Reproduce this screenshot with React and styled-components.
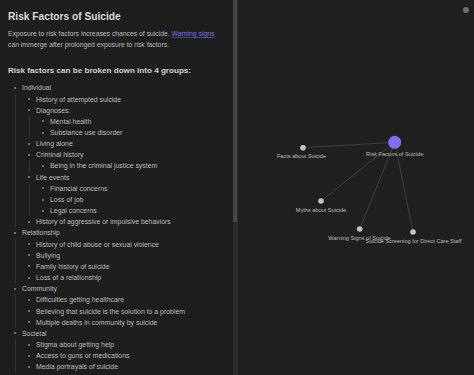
import React from "react";
import styled, { createGlobalStyle } from "styled-components";

const Global = createGlobalStyle`
  html, body {
    margin: 0;
    padding: 0;
    background: #1e1e1e;
  }
  body {
    font-family: "Liberation Sans", Arial, sans-serif;
  }
`;

//whole window, note on the left and graph on the right
const Window = styled.div`
  display: flex;
  width: 474px;
  height: 375px;
  overflow: hidden;
`;

//note pane
const NotePane = styled.div`
  width: 233px;
  flex: none;
  box-sizing: border-box;
  padding: 10px 8px 0 8px;
  background: #1e1e1e;
  overflow: hidden;
`;

const Title = styled.h1`
  margin: 0;
  font-size: 10.2px;
  line-height: 14px;
  font-weight: 700;
  color: #dcdcdc;
`;

const Para = styled.p`
  margin: 5px 0 0 0;
  font-size: 6.8px;
  line-height: 10.7px;
  color: #bdbdbd;
`;

const Link = styled.a`
  color: #7d6ff0;
  text-decoration: underline;
  text-decoration-color: #4a4290;
`;

const Heading = styled.h2`
  margin: 14.3px 0 0 0;
  font-size: 8.1px;
  line-height: 12px;
  font-weight: 700;
  color: #d4d4d4;
`;

//list, nested levels draw an indent guide
const List = styled.ul`
  list-style: none;
  margin: ${p => (p.nested ? "0 0 0 -7px" : "5.7px 0 0 0")};
  padding: 0 0 0 ${p => (p.nested ? "20px" : "14px")};
  border-left: ${p => (p.nested ? "1px solid #333333" : "none")};
`;

const Item = styled.li`
  position: relative;
  font-size: 6.9px;
  line-height: 11.15px;
  color: #bdbdbd;
  white-space: nowrap;

  &::before {
    content: "";
    position: absolute;
    left: -8px;
    top: 4.6px;
    width: 2px;
    height: 2px;
    border-radius: 50%;
    background: #8a8a8a;
  }
`;

//thin scrollbar between panes
const Scroll = styled.div`
  width: 4px;
  flex: none;
  background: #2b2b2b;
  display: flex;
  flex-direction: column;
`;

const Thumb = styled.div`
  height: 222px;
  background: #474747;
`;

//graph view
const GraphPane = styled.div`
  flex: 1;
  background: #202020;
  border-left: 1px solid #2e2e2e;
`;

const Label = styled.text`
  font-family: "Liberation Sans", Arial, sans-serif;
  font-size: 5.6px;
  fill: #bcbcbc;
`;

const tree = [
  {
    t: "Individual",
    c: [
      { t: "History of attempted suicide" },
      { t: "Diagnoses:", c: [{ t: "Mental health" }, { t: "Substance use disorder" }] },
      { t: "Living alone" },
      { t: "Criminal history", c: [{ t: "Being in the criminal justice system" }] },
      {
        t: "Life events",
        c: [{ t: "Financial concerns" }, { t: "Loss of job" }, { t: "Legal concerns" }],
      },
      { t: "History of aggressive or impulsive behaviors" },
    ],
  },
  {
    t: "Relationship",
    c: [
      { t: "History of child abuse or sexual violence" },
      { t: "Bullying" },
      { t: "Family history of suicide" },
      { t: "Loss of a relationship" },
    ],
  },
  {
    t: "Community",
    c: [
      { t: "Difficulties getting healthcare" },
      { t: "Believing that suicide is the solution to a problem" },
      { t: "Multiple deaths in community by suicide" },
    ],
  },
  {
    t: "Societal",
    c: [
      { t: "Stigma about getting help" },
      { t: "Access to guns or medications" },
      { t: "Media portrayals of suicide" },
    ],
  },
];

function Tree({ items, nested }) {
  return (
    <List nested={nested}>
      {items.map(item => (
        <Item key={item.t}>
          {item.t}
          {item.c && <Tree items={item.c} nested />}
        </Item>
      ))}
    </List>
  );
}

const hub = { x: 156.7, y: 142.3 };
const nodes = [
  { x: 65, y: 147.7, label: "Facts about Suicide", lx: 63.5, ly: 158 },
  { x: 83, y: 201, label: "Myths about Suicide", lx: 83, ly: 212 },
  { x: 121.7, y: 229, label: "Warning Signs of Suicide", lx: 121.5, ly: 240 },
  { x: 175, y: 232, label: "Suicide Screening for Direct Care Staff", lx: 175.5, ly: 242.7 },
];

function Graph() {
  return (
    <svg width="236" height="375" viewBox="0 0 236 375">
      {nodes.map(n => (
        <line key={n.label} x1={hub.x} y1={hub.y} x2={n.x} y2={n.y} stroke="#3e3e3e" strokeWidth="1" />
      ))}
      <circle cx="228" cy="10" r="3" fill="#6e6e6e" />
      {nodes.map(n => (
        <g key={n.label}>
          <circle cx={n.x} cy={n.y} r="2.8" fill="#c4c4c4" />
          <Label x={n.lx} y={n.ly} textAnchor="middle">
            {n.label}
          </Label>
        </g>
      ))}
      <circle cx={hub.x} cy={hub.y} r="6.5" fill="#7f6df2" />
      <Label x={hub.x} y="155.7" textAnchor="middle">
        Risk Factors of Suicide
      </Label>
    </svg>
  );
}

export default function App() {
  return (
    <>
      <Global />
      <Window>
        <NotePane>
          <Title>Risk Factors of Suicide</Title>
          <Para>
            Exposure to risk factors increases chances of suicide. <Link>Warning signs</Link>
            <br />
            can immerge after prolonged exposure to risk factors.
          </Para>
          <Heading>Risk factors can be broken down into 4 groups:</Heading>
          <Tree items={tree} />
        </NotePane>
        <Scroll>
          <Thumb />
        </Scroll>
        <GraphPane>
          <Graph />
        </GraphPane>
      </Window>
    </>
  );
}
